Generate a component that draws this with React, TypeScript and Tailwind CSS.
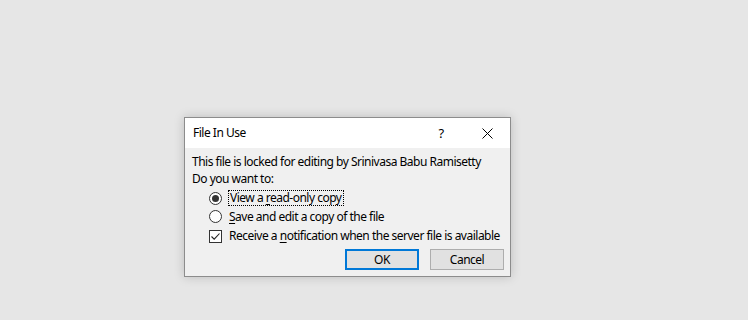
import React from "react";

export default function App() {
  const font = { fontFamily: '"Noto Sans", "Open Sans", sans-serif' };
  return (
    <div className="w-[748px] h-[320px] bg-[#e6e6e6] pl-[184px] pt-[117px]" style={font}>
      <div className="w-[327px] h-[160px] border border-[#8c8c8c] bg-[#f0f0f0] flex flex-col shadow-[0_0_10px_rgba(0,0,0,0.18)] text-[12px] tracking-[-0.5px] text-black">
        <div className="h-[30px] bg-white flex items-center pl-[8px] shrink-0">
          <span className="flex-1 leading-none">File In Use</span>
          <span className="w-[46px] text-center text-[13px] leading-none">?</span>
          <span className="w-[46px] flex justify-center">
            <svg width="11" height="11" viewBox="0 0 11 11">
              <path d="M0.5 0.5 L10.5 10.5 M10.5 0.5 L0.5 10.5" stroke="#000" strokeWidth="1" />
            </svg>
          </span>
        </div>
        <div className="flex-1 flex flex-col pl-[7px] pt-[5px] pr-[6px]">
          <div className="h-[17px] leading-[17px] whitespace-nowrap">This file is locked for editing by Srinivasa Babu Ramisetty</div>
          <div className="h-[17px] leading-[17px] whitespace-nowrap">Do you want to:</div>
          <div className="flex flex-col pl-[17px] pt-[2px]">
            <div className="h-[18px] flex items-center">
              <span className="w-[13px] h-[13px] shrink-0 rounded-full border border-[#333] bg-white flex items-center justify-center">
                <span className="w-[7px] h-[7px] rounded-full bg-[#333]" />
              </span>
              <span className="ml-[6px] border border-dotted border-black px-[1px] leading-[14px] whitespace-nowrap">
                View a <span className="underline underline-offset-2">r</span>ead-only copy
              </span>
            </div>
            <div className="h-[19px] flex items-center">
              <span className="w-[13px] h-[13px] shrink-0 rounded-full border border-[#333] bg-white" />
              <span className="ml-[7px] leading-[14px] whitespace-nowrap">
                <span className="underline underline-offset-2">S</span>ave and edit a copy of the file
              </span>
            </div>
            <div className="h-[20px] flex items-center">
              <span className="w-[13px] h-[13px] shrink-0 border border-[#333] bg-white flex items-center justify-center">
                <svg width="11" height="11" viewBox="0 0 11 11">
                  <path d="M1.5 5.5 L4.2 8.2 L9.5 2.5" stroke="#222" strokeWidth="1.1" fill="none" />
                </svg>
              </span>
              <span className="ml-[7px] leading-[14px] whitespace-nowrap">
                Receive a <span className="underline underline-offset-2">n</span>otification when the server file is available
              </span>
            </div>
          </div>
          <div className="flex justify-end gap-[11px] mt-[3px]">
            <button className="w-[74px] h-[21px] border-2 border-[#0078d7] bg-[#e1e1e1] text-[12px] leading-none">OK</button>
            <button className="w-[74px] h-[21px] border border-[#adadad] bg-[#e1e1e1] text-[12px] leading-none">Cancel</button>
          </div>
        </div>
      </div>
    </div>
  );
}
